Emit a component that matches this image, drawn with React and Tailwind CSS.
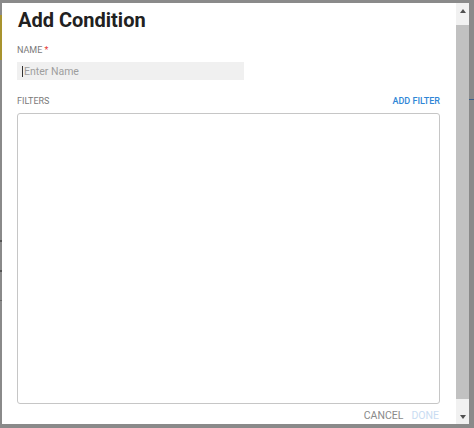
import React from "react";

export default function App() {
  return (
    <div
      className="relative w-[474px] h-[428px] overflow-hidden bg-[#8a8a8a] flex pt-[3px] pl-[2px] pr-[5px] pb-[4px]"
      style={{ fontFamily: "Roboto, 'Liberation Sans', sans-serif" }}
    >
      {/* faint background content under overlay */}
      <div className="absolute left-0 top-[15px] w-[2px] h-[45px] bg-[#a8932e]" />
      <div className="absolute right-0 top-[99px] w-[5px] h-px bg-[#3b5f8a]" />
      <div className="absolute left-0 top-[240px] w-[2px] h-[2px] bg-[#555]" />
      <div className="absolute left-0 top-[270px] w-[2px] h-[2px] bg-[#555]" />
      <div className="absolute left-0 top-[300px] w-[2px] h-px bg-[#666]" />

      <div className="flex-1 flex bg-white">
        {/* content */}
        <div className="flex-1 flex flex-col pl-[15px] pr-[16px] pt-[5px] pb-[2px]">
          <h1 className="text-[20px] leading-[24px] font-bold text-[#212121] pl-[1px]">
            Add Condition
          </h1>

          <div className="mt-[13px] text-[9px] leading-[11px] text-[#7a7a7a] uppercase">
            NAME <span className="text-[#e53935]">*</span>
          </div>

          <div className="mt-[6px] w-[227px] h-[18px] bg-[#f0f0f0] flex items-center pl-[5px]">
            <span className="w-px h-[11px] bg-[#333]" />
            <span className="text-[10.5px] leading-[13px] text-[#9e9e9e] ml-[1px]">
              Enter Name
            </span>
          </div>

          <div className="mt-[16px] flex justify-between items-baseline text-[9px] leading-[11px]">
            <span className="text-[#7a7a7a]">FILTERS</span>
            <span className="text-[#2f86d6] font-medium">ADD FILTER</span>
          </div>

          <div className="mt-[6px] flex-1 border border-[#c6c6c6] rounded-[3px]" />

          <div className="mt-[5px] flex justify-end gap-[8px] text-[10.5px] leading-[13px] pr-[1px]">
            <span className="text-[#8a8a8a]">CANCEL</span>
            <span className="text-[#c9dcf2]">DONE</span>
          </div>
        </div>

        {/* scrollbar */}
        <div className="w-[13px] bg-[#f1f1f1] flex flex-col">
          <div className="h-[15px] flex items-center justify-center">
            <svg width="6" height="4" viewBox="0 0 6 4">
              <polygon points="0,4 6,4 3,0" fill="#505050" />
            </svg>
          </div>
          <div className="mt-[7px] h-[374px] bg-[#c1c1c1]" />
          <div className="flex-1 flex items-end justify-center pb-[5px]">
            <svg width="6" height="4" viewBox="0 0 6 4">
              <polygon points="0,0 6,0 3,4" fill="#505050" />
            </svg>
          </div>
        </div>
      </div>
    </div>
  );
}
